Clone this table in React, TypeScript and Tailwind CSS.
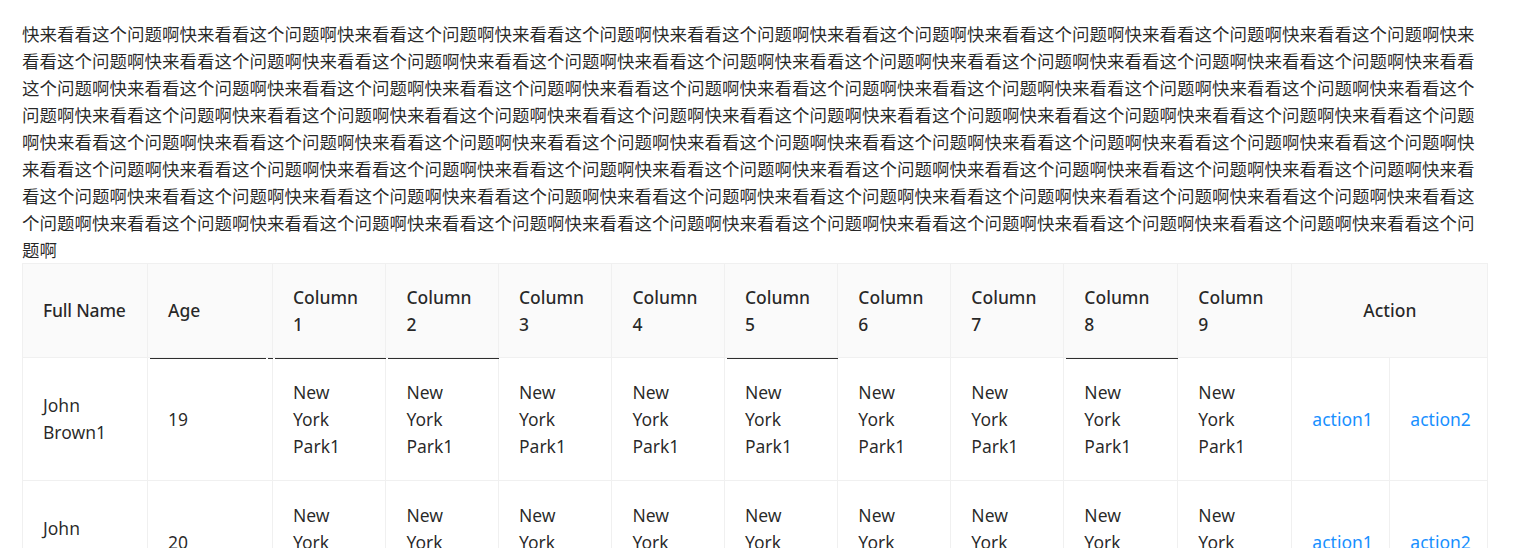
import React from "react";

const para = "快来看看这个问题啊".repeat(74);

const colWidths = [
  "w-[125px]",
  "w-[125px]",
  "w-[113.4px]",
  "w-[112.6px]",
  "w-[113.4px]",
  "w-[112.6px]",
  "w-[113.4px]",
  "w-[113px]",
  "w-[113px]",
  "w-[114px]",
  "w-[114px]",
  "w-[98px]",
  "w-[98px]",
];

const lineCols = new Set([1, 2, 5, 8]);

const th =
  "relative bg-[#fafafa] border-r border-b border-[#f0f0f0] px-[20px] py-[19.5px] text-left font-medium align-middle";
const td =
  "border-r border-b border-[#f0f0f0] px-[20px] py-[20.5px] text-left align-middle";

const rows = [
  { name: "John Brown1", age: 19, addr: "New York Park1" },
  { name: "John Brown2", age: 20, addr: "New York Park2" },
];

export default function App() {
  return (
    <div
      className="pt-[20px] pl-[22px] text-[17.5px] leading-[27px] text-[rgba(0,0,0,0.85)] bg-white"
      style={{ fontFamily: '"Noto Sans", "Noto Sans CJK SC", sans-serif' }}
    >
      <div className="w-[1466.4px]">
        <p className="m-0 break-all" style={{ fontFamily: '"Noto Sans CJK SC", sans-serif' }}>
          {para}
        </p>
        <table className="table-fixed border-separate border-spacing-0 w-[1466.4px] border-l border-t border-[#f0f0f0]">
          <colgroup>
            {colWidths.map((w, i) => (
              <col key={i} className={w} />
            ))}
          </colgroup>
          <thead>
            <tr>
              <th className={th + " whitespace-nowrap tracking-[-0.2px]"}>Full Name</th>
              <th className={th}>
                Age
                <span className="absolute left-[2px] right-[6px] bottom-[-2px] h-px bg-[#2e2e2e]" />
                <span className="absolute left-[120px] w-[5px] bottom-[-2px] h-px bg-[#2e2e2e]" />
              </th>
              {Array.from({ length: 9 }, (_, i) => (
                <th key={i} className={th}>
                  Column {i + 1}
                  {lineCols.has(i + 1) && (
                    <span className="absolute left-[2px] right-[-1px] bottom-[-2px] h-px bg-[#2e2e2e]" />
                  )}
                </th>
              ))}
              <th colSpan={2} className={th + " !text-center"}>
                Action
              </th>
            </tr>
          </thead>
          <tbody>
            {rows.map((r, ri) => (
              <tr key={ri}>
                <td className={td}>{r.name}</td>
                <td className={td}>{r.age}</td>
                {Array.from({ length: 9 }, (_, i) => (
                  <td key={i} className={td}>
                    {r.addr}
                  </td>
                ))}
                <td className={td + " !text-center"}>
                  <a className="text-[#1890ff] cursor-pointer">action1</a>
                </td>
                <td className={td + " !text-center"}>
                  <a className="text-[#1890ff] cursor-pointer">action2</a>
                </td>
              </tr>
            ))}
          </tbody>
        </table>
      </div>
    </div>
  );
}
